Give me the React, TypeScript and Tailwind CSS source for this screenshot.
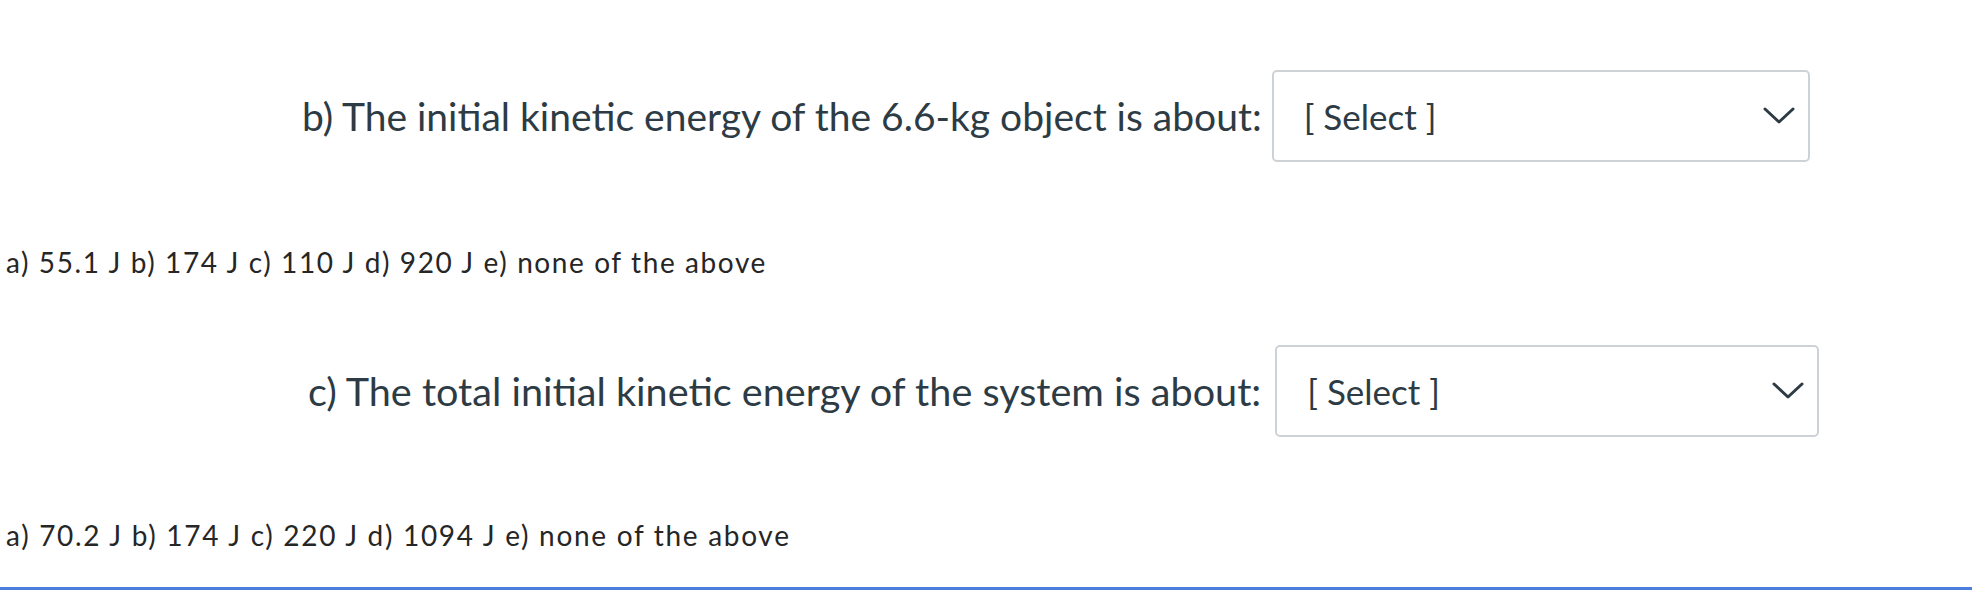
import React from 'react';

const Chevron: React.FC = () => (
    <svg width="32" height="18" viewBox="0 0 32 18" fill="none">
        <path d="M2 2 L16 15 L30 2" stroke="#2d3b45" strokeWidth="3" strokeLinecap="round" strokeLinejoin="round" />
    </svg>
);

const SelectBox: React.FC<{ width: string }> = ({ width }) => (
    <div className={`${width} h-[92px] flex items-center justify-between pl-[30px] pr-[13px] border-2 border-[#cdd2d6] rounded-[5px] bg-white`}>
        <span className="text-[35px] text-[#2d3b45]">[ Select ]</span>
        <Chevron />
    </div>
);

const App: React.FC = () => {
    return (
        <div className="w-[1972px] h-[594px] bg-white overflow-hidden font-['Lato',sans-serif]">
            <div className="h-[70px]" />
            <div className="flex items-center pl-[302px]">
                <span className="text-[39px] text-[#2d3b45] mr-[10px]">b) The initial kinetic energy of the 6.6-kg object is about:</span>
                <SelectBox width="w-[538px]" />
            </div>
            <div className="mt-[80px] h-[40px] leading-[40px] pl-[6px] text-[28px] tracking-[1.6px] text-[#262626] whitespace-nowrap">
                a) 55.1 J b) 174 J c) 110 J d) 920 J e) none of the above
            </div>
            <div className="mt-[63px] flex items-center pl-[308px]">
                <span className="text-[39.6px] text-[#2d3b45] mr-[14px]">c) The total initial kinetic energy of the system is about:</span>
                <SelectBox width="w-[544px]" />
            </div>
            <div className="mt-[78px] h-[40px] leading-[40px] pl-[6px] text-[28px] tracking-[1.7px] text-[#262626] whitespace-nowrap">
                a) 70.2 J b) 174 J c) 220 J d) 1094 J e) none of the above
            </div>
            <div className="mt-[32px] h-[3px] bg-[#4a7fdc]" />
        </div>
    );
};

export default App;
